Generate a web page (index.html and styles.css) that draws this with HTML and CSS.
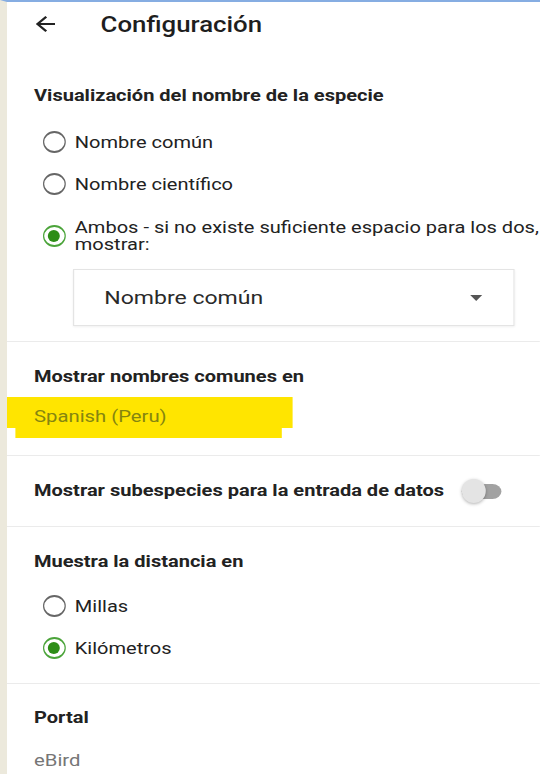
FILE: index.html
```html
<!DOCTYPE html>
<html lang="es">
<head>
    <meta charset="UTF-8">
    <meta name="viewport" content="width=device-width, initial-scale=1.0">
    <title>Configuración</title>
    <link rel="stylesheet" href="styles.css">
</head>
<body>
    <div class="app">
        <!-- la captura original está estirada en horizontal, por eso el scaleX -->
        <div class="content">
            <div class="topbar">
                <span class="back">
                    <svg width="24" height="24" viewBox="0 0 24 24"><path d="M20 11H7.83l5.59-5.59L12 4l-8 8 8 8 1.41-1.41L7.83 13H20v-2z" fill="#222"/></svg>
                </span>
                <h1>Configuración</h1>
            </div>

            <div class="section first">
                <div class="section-title">Visualización del nombre de la especie</div>
                <div class="radio-list">
                    <div class="radio-row">
                        <span class="radio"></span>
                        <span class="radio-label">Nombre común</span>
                    </div>
                    <div class="radio-row">
                        <span class="radio"></span>
                        <span class="radio-label">Nombre científico</span>
                    </div>
                    <div class="radio-row multi">
                        <span class="radio checked"></span>
                        <span class="radio-label">Ambos - si no existe suficiente espacio para los dos,<br>mostrar:</span>
                    </div>
                </div>
                <div class="select">
                    <span>Nombre común</span>
                    <span class="caret"></span>
                </div>
            </div>

            <div class="section">
                <div class="section-title">Mostrar nombres comunes en</div>
                <div class="value marked">Spanish (Peru)</div>
            </div>

            <div class="section toggle-section">
                <div class="section-title">Mostrar subespecies para la entrada de datos</div>
                <span class="switch"><span class="thumb"></span></span>
            </div>

            <div class="section dist">
                <div class="section-title">Muestra la distancia en</div>
                <div class="radio-list">
                    <div class="radio-row">
                        <span class="radio"></span>
                        <span class="radio-label">Millas</span>
                    </div>
                    <div class="radio-row">
                        <span class="radio checked"></span>
                        <span class="radio-label">Kilómetros</span>
                    </div>
                </div>
            </div>

            <div class="section portal">
                <div class="section-title">Portal</div>
                <div class="value">eBird</div>
            </div>
        </div>
    </div>
</body>
</html>
```

FILE: styles.css
```css
* {
    margin: 0;
    padding: 0;
    box-sizing: border-box;
}

body {
    font-family: Roboto, "Noto Sans", sans-serif;
    background: #fff;
    color: #222;
    overflow: hidden;
}

.app {
    border-left: 7px solid #ece9dc;
    border-top: 2px solid #86ade2;
    min-height: 100vh;
}

.content {
    width: 444px;
    transform: scaleX(1.2);
    transform-origin: left top;
}

.topbar {
    height: 44px;
    display: flex;
    align-items: center;
    padding-left: 20px;
}

.back {
    display: flex;
    width: 24px;
    height: 24px;
}

.topbar h1 {
    font-size: 21.5px;
    font-weight: 500;
    margin-left: 34px;
    color: #1e1e1e;
}

.section {
    padding: 24px 0 28px 22.5px;
    border-top: 1px solid #ebebeb;
    isolation: isolate;
}

.section.first {
    border-top: none;
    padding-top: 39px;
    padding-bottom: 15px;
}

.section-title {
    font-size: 16.7px;
    font-weight: 700;
    line-height: 22px;
    color: #222;
}

.radio-list {
    margin-top: 14px;
}

.radio-row {
    display: flex;
    align-items: center;
    padding: 10px 0;
    white-space: nowrap;
}

.radio-row.multi {
    padding-top: 14px;
}

.radio {
    width: 19px;
    height: 22px;
    border: 2px solid #666;
    border-left-width: 1.7px;
    border-right-width: 1.7px;
    border-radius: 50%;
    margin-left: 7px;
    margin-right: 8px;
    flex-shrink: 0;
    display: flex;
    align-items: center;
    justify-content: center;
}

.radio.checked {
    border-color: #4ba43a;
}

.radio.checked::after {
    content: "";
    width: 10px;
    height: 12px;
    border-radius: 50%;
    background: #2e8d17;
}

.radio-label {
    font-size: 16.7px;
    line-height: 17px;
    color: #222;
}

.select {
    margin: 6px 21px 0 32.5px;
    height: 57px;
    border: 1px solid #e4e4e4;
    box-shadow: 0 1px 2px rgba(0,0,0,0.06);
    display: flex;
    align-items: center;
    justify-content: space-between;
    padding: 0 26px 0 25px;
    font-size: 19.2px;
    color: #2a2a2a;
}

.caret {
    width: 0;
    height: 0;
    border-left: 5px solid transparent;
    border-right: 5px solid transparent;
    border-top: 6px solid #555;
}

.value {
    margin-top: 17px;
    font-size: 16.9px;
    line-height: 22px;
    color: #767676;
}

.value.marked {
    position: relative;
    color: #858510;
}

.value.marked::before {
    content: "";
    position: absolute;
    left: -22.5px;
    top: -8px;
    width: 238px;
    height: 31px;
    background: #ffe500;
    z-index: -1;
}

.value.marked::after {
    content: "";
    position: absolute;
    left: -16px;
    top: 22px;
    width: 222px;
    height: 11px;
    background: #ffe500;
    z-index: -1;
}

.toggle-section {
    display: flex;
    align-items: center;
    padding-top: 24px;
    padding-bottom: 24px;
}

.switch {
    margin-left: 15px;
    width: 33px;
    height: 15px;
    border-radius: 8px;
    background: #a2a2a2;
    display: flex;
    align-items: center;
}

.thumb {
    width: 20px;
    height: 24px;
    border-radius: 50%;
    background: #e4e4e4;
    box-shadow: 0 1px 3px rgba(0,0,0,0.3);
}

.dist {
    padding-bottom: 14px;
}

.dist .radio-list {
    margin-top: 12px;
}

.portal {
    padding-top: 23px;
}

.portal .value {
    margin-top: 20px;
}
```
